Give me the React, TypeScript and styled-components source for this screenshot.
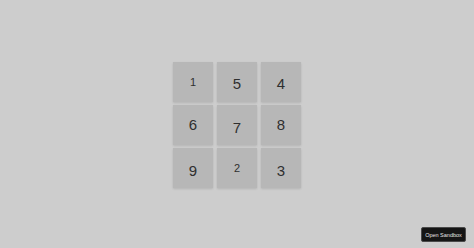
import React from 'react';
import styled, { createGlobalStyle } from 'styled-components';

const GlobalStyle = createGlobalStyle`
  html, body {
    margin: 0;
    padding: 0;
    height: 100%;
    background: #cdcdcd;
  }
  #root {
    height: 100%;
  }
`;

const Page = styled.div`
  height: 100vh;
  display: flex;
  align-items: center;
  justify-content: center;
  font-family: 'Liberation Sans', Arial, sans-serif;
`;

const Board = styled.div`
  display: grid;
  grid-template-columns: repeat(3, 40px);
  grid-auto-rows: 40px;
  gap: 3px 4px;
  margin-top: 1px;
`;

const Tile = styled.div`
  display: flex;
  align-items: center;
  justify-content: center;
  background: #b7b7b7;
  box-shadow: 0 1px 2px rgba(0, 0, 0, 0.12);
  cursor: pointer;
`;

const Digit = styled.span<{ $small?: boolean; $drop: number }>`
  display: block;
  line-height: 1;
  font-size: ${(p) => (p.$small ? 11 : 15)}px;
  color: #2f2f2f;
  transform: translateY(${(p) => p.$drop}px);
`;

const SandboxButton = styled.a`
  position: fixed;
  right: 8px;
  bottom: 6px;
  height: 15px;
  width: 45px;
  box-sizing: border-box;
  display: flex;
  align-items: center;
  justify-content: center;
  background: #151515;
  border: 1px solid #4a4a4a;
  border-radius: 2px;
  color: #e6e6e6;
  font-family: 'Liberation Sans', Arial, sans-serif;
  font-size: 5.5px;
  text-decoration: none;
  white-space: nowrap;
`;

// old-style figures: small ones sit on the x-height, some hang below
const figure: Record<number, { small?: boolean; drop: number }> = {
  1: { small: true, drop: 1 },
  2: { small: true, drop: 1 },
  3: { drop: 2.5 },
  4: { drop: 1.5 },
  5: { drop: 1.5 },
  6: { drop: -0.5 },
  7: { drop: 2.5 },
  8: { drop: -0.5 },
  9: { drop: 2.5 },
};

const tiles = [1, 5, 4, 6, 7, 8, 9, 2, 3];

const App: React.FC = () => {
  return (
    <>
      <GlobalStyle />
      <Page>
        <Board>
          {tiles.map((n) => (
            <Tile key={n}>
              <Digit $small={figure[n].small} $drop={figure[n].drop}>
                {n}
              </Digit>
            </Tile>
          ))}
        </Board>
      </Page>
      <SandboxButton href="#">Open Sandbox</SandboxButton>
    </>
  );
};

export default App;
